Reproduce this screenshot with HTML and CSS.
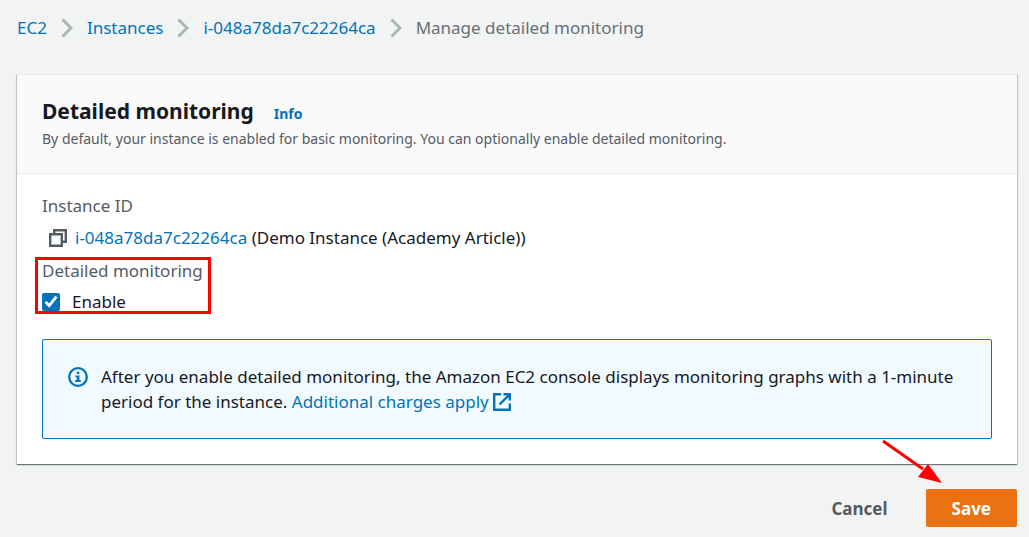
FILE: index.html
```html
<!DOCTYPE html>
<html lang="en">
<head>
    <meta charset="UTF-8">
    <meta name="viewport" content="width=device-width, initial-scale=1.0">
    <title>Manage detailed monitoring</title>
    <link rel="stylesheet" href="styles.css">
</head>
<body>
    <nav class="breadcrumb">
        <a href="#">EC2</a>
        <svg class="chevron" viewBox="0 0 12 20"><path d="M1.5 1.5 L10 10 L1.5 18.5"/></svg>
        <a href="#">Instances</a>
        <svg class="chevron" viewBox="0 0 12 20"><path d="M1.5 1.5 L10 10 L1.5 18.5"/></svg>
        <a href="#">i-048a78da7c22264ca</a>
        <svg class="chevron" viewBox="0 0 12 20"><path d="M1.5 1.5 L10 10 L1.5 18.5"/></svg>
        <span class="current">Manage detailed monitoring</span>
    </nav>
    <form class="main">
        <div class="card">
            <header class="card-header">
                <div class="title-row">
                    <h1>Detailed monitoring</h1>
                    <a class="info" href="#">Info</a>
                </div>
                <p>By default, your instance is enabled for basic monitoring. You can optionally enable detailed monitoring.</p>
            </header>
            <div class="card-body">
                <div class="label">Instance ID</div>
                <div class="instance">
                    <svg class="copy" viewBox="0 0 18 18">
                        <path d="M1.2 5.2 H12.8 V16.8 H1.2 Z"/>
                        <path d="M5.2 5 V1.2 H16.8 V12.8 H13"/>
                    </svg>
                    <span><a href="#">i-048a78da7c22264ca</a> (Demo Instance (Academy Article))</span>
                </div>
                <div class="field">
                    <div class="label" id="monitoring">Detailed monitoring</div>
                    <label class="check">
                        <input type="checkbox" aria-describedby="monitoring" checked>
                        <span>Enable</span>
                    </label>
                    <div class="highlight"></div>
                </div>
                <div class="alert">
                    <svg class="info-icon" viewBox="0 0 20 20">
                        <circle cx="10" cy="10" r="8.8"/>
                        <path d="M8.8 4.8 H11.2 V7 H8.8 Z M7.4 8.4 H11.4 V13 H12.8 V15 H7.2 V13 H8.8 V10.3 H7.4 Z"/>
                    </svg>
                    <p>After you enable detailed monitoring, the Amazon EC2 console displays monitoring graphs with a 1-minute period for the instance. <a href="#">Additional charges apply <svg class="external" viewBox="0 0 18 18"><path d="M8 1.2 H1.2 V16.8 H16.8 V10.5 M10.5 1.2 H16.8 V7.5 M16.5 1.5 L6.5 11.5"/></svg></a></p>
                </div>
            </div>
        </div>
        <div class="actions">
            <button type="button" class="cancel">Cancel</button>
            <button type="submit" class="save">Save</button>
            <svg class="arrow" viewBox="0 0 62 46">
                <path d="M2 2 L42 30" stroke="#f00" stroke-width="3"/>
                <path d="M61 44 L37 38 L47 25 Z" fill="#f00"/>
            </svg>
        </div>
    </form>
</body>
</html>
```

FILE: styles.css
```css
body{
    margin: 0;
    padding: 15px 12px 10px 17px;
    background-color: #f2f3f3;
    color: #16191f;
    font-family: "Noto Sans", "Open Sans", sans-serif;
    font-size: 17px;
    line-height: 25px;
}
h1, p{
    margin: 0;
}
a{
    color: #0073bb;
    text-decoration: none;
}
svg{
    fill: none;
    flex-shrink: 0;
}
.breadcrumb{
    display: flex;
    align-items: center;
    gap: 14px;
}
.chevron{
    width: 12px;
    height: 20px;
    stroke: #aab7b8;
    stroke-width: 3;
}
.current{
    color: #687078;
}
.card{
    margin-top: 34px;
    background-color: #fff;
    border-top: 1px solid #eaeded;
    box-shadow: 0 1px 1px rgba(0,28,36,.4), 1px 1px 1px rgba(0,28,36,.15), -1px 1px 1px rgba(0,28,36,.15);
}
.card-header{
    padding: 23px 25px 22px;
    background-color: #fafafa;
    border-bottom: 1px solid #eaeded;
}
.title-row{
    display: flex;
    align-items: baseline;
    gap: 20px;
}
h1{
    font-size: 21px;
    line-height: 26px;
}
.info{
    font-size: 14px;
    font-weight: bold;
}
.card-header p{
    color: #545b64;
    font-size: 14px;
}
.card-body{
    padding: 19px 25px 25px;
}
.label{
    color: #545b64;
}
.instance{
    display: flex;
    align-items: center;
    gap: 8px;
    padding: 7px 7px 8px;
}
.copy{
    width: 18px;
    height: 18px;
    stroke: #545b64;
    stroke-width: 2.4;
}
.field{
    position: relative;
}
.check{
    display: flex;
    align-items: center;
    gap: 12px;
    margin-top: 6px;
}
.check input{
    width: 18px;
    height: 18px;
    margin: 0;
    accent-color: #0073bb;
}
.highlight{
    position: absolute;
    top: -1px;
    left: -7px;
    width: 170px;
    height: 51px;
    border: 3px solid #f00;
    pointer-events: none;
}
.alert{
    display: flex;
    gap: 13px;
    margin-top: 25px;
    padding: 24px;
    background-color: #f1faff;
    border: 1px solid #0073bb;
    border-radius: 2px;
}
.info-icon{
    width: 20px;
    height: 20px;
    margin: 3px 0 0 1px;
}
.info-icon circle{
    stroke: #0073bb;
    stroke-width: 2.3;
}
.info-icon path{
    fill: #0073bb;
}
.external{
    width: 18px;
    height: 18px;
    stroke: #0073bb;
    stroke-width: 2.4;
    vertical-align: -3px;
}
.actions{
    position: relative;
    display: flex;
    justify-content: flex-end;
    gap: 12px;
    margin-top: 25px;
}
button{
    height: 38px;
    padding: 0 26px;
    border: none;
    border-radius: 2px;
    font-family: inherit;
    font-size: 17px;
    font-weight: bold;
    cursor: pointer;
}
.cancel{
    background-color: transparent;
    color: #545b64;
}
.save{
    background-color: #ec7211;
    color: #fff;
}
.arrow{
    position: absolute;
    top: -50px;
    right: 74px;
    width: 62px;
    height: 46px;
}
```
